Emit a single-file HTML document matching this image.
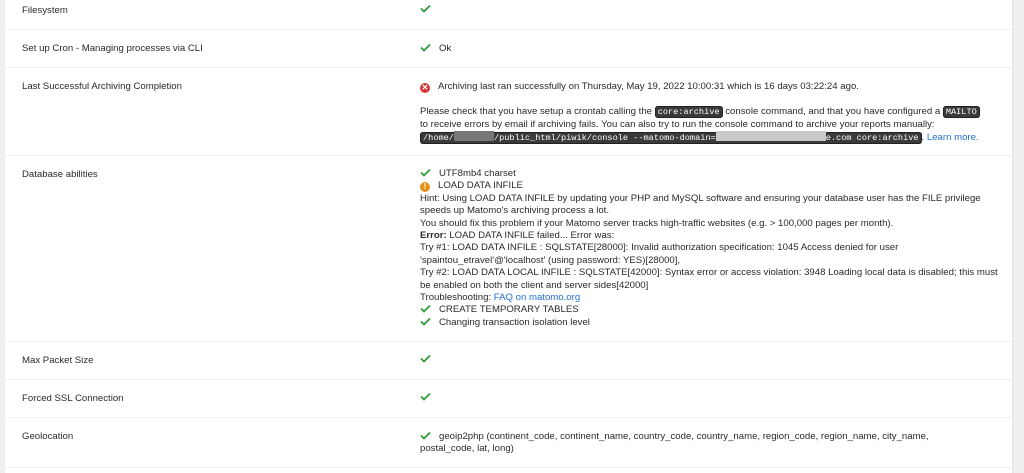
<!DOCTYPE html>
<html><head><meta charset="utf-8"><style>
*{margin:0;padding:0;box-sizing:border-box}
body{width:1024px;height:473px;overflow:hidden;background:#fff;font-family:"Liberation Sans",sans-serif;font-size:9.6px;color:#2a2a2a;position:relative}
.lstrip{position:absolute;left:0;top:0;width:5px;height:473px;background:#eeeff1}
.rstrip{position:absolute;left:1012px;top:0;width:12px;height:473px;background:#eeeff1;border-left:1px solid #e2e3e6}
.hr{position:absolute;left:5px;width:1007px;height:1px;background:#eef0f2}
.t{position:absolute;white-space:nowrap;line-height:12.4px}
.lab{left:22px}
.v{left:420px}
.ck{display:inline-block;width:11px;height:9px;vertical-align:-1px}
code{font-family:"Liberation Mono",monospace;font-size:8.6px;background:#3a3a3a;color:#fff;border-radius:3px;padding:0 2px;border:1px solid #222}
a{color:#1e6fd0;text-decoration:none}
.ic{display:inline-block;width:10px;height:10px;border-radius:50%;color:#fff;font-size:8px;font-weight:bold;text-align:center;line-height:10px;vertical-align:-1px}
.blur{display:inline-block;background:#c9c9c9;height:10px;vertical-align:-1px}
</style></head><body>
<svg width="0" height="0" style="position:absolute"><symbol id="c" viewBox="0 0 11 9"><path d="M1 4.5 L4 7.5 L10 1.5" fill="none" stroke="#2e9a3a" stroke-width="1.8"/></symbol></svg>
<div class="lstrip"></div><div class="rstrip"></div>
<div class="hr" style="top:29px"></div>
<div class="hr" style="top:67px"></div>
<div class="hr" style="top:155px"></div>
<div class="hr" style="top:341px"></div>
<div class="hr" style="top:379px"></div>
<div class="hr" style="top:417px"></div>
<div class="hr" style="top:467px"></div>

<div class="t lab" style="top:5px">Filesystem</div>
<div class="t v" style="top:4px"><svg class="ck"><use href="#c"/></svg></div>

<div class="t lab" style="top:43px">Set up Cron - Managing processes via CLI</div>
<div class="t v" style="top:43px"><svg class="ck"><use href="#c"/></svg>&nbsp;&nbsp;&nbsp;Ok</div>

<div class="t lab" style="top:81px">Last Successful Archiving Completion</div>
<div class="t v" style="top:81px"><span class="ic" style="background:#d4373a">✕</span>&nbsp;&nbsp;&nbsp;Archiving last ran successfully on Thursday, May 19, 2022 10:00:31 which is 16 days 03:22:24 ago.</div>
<div class="t v" style="top:106px;line-height:12.5px">Please check that you have setup a crontab calling the <code>core:archive</code> console command, and that you have configured a <code>MAILTO</code><br>to receive errors by email if archiving fails. You can also try to run the console command to archive your reports manually:<br><code>/home/<span class="blur" style="width:40px;background:#777"></span>/public_html/piwik/console --matomo-domain=<span class="blur" style="width:110px"></span>e.com core:archive</code>. <a>Learn more.</a></div>

<div class="t lab" style="top:169px">Database abilities</div>
<div class="t v" style="top:168px;line-height:12.4px"><svg class="ck"><use href="#c"/></svg>&nbsp;&nbsp;&nbsp;UTF8mb4 charset<br><span class="ic" style="background:#e8901a">!</span>&nbsp;&nbsp;&nbsp;LOAD DATA INFILE<br>Hint: Using LOAD DATA INFILE by updating your PHP and MySQL software and ensuring your database user has the FILE privilege<br>speeds up Matomo's archiving process a lot.<br>You should fix this problem if your Matomo server tracks high-traffic websites (e.g. &gt; 100,000 pages per month).<br><b>Error:</b> LOAD DATA INFILE failed... Error was:<br>Try #1: LOAD DATA INFILE : SQLSTATE[28000]: Invalid authorization specification: 1045 Access denied for user<br>'spaintou_etravel'@'localhost' (using password: YES)[28000],<br>Try #2: LOAD DATA LOCAL INFILE : SQLSTATE[42000]: Syntax error or access violation: 3948 Loading local data is disabled; this must<br>be enabled on both the client and server sides[42000]<br>Troubleshooting: <a>FAQ on matomo.org</a><br><svg class="ck"><use href="#c"/></svg>&nbsp;&nbsp;&nbsp;CREATE TEMPORARY TABLES<br><svg class="ck"><use href="#c"/></svg>&nbsp;&nbsp;&nbsp;Changing transaction isolation level</div>

<div class="t lab" style="top:355px">Max Packet Size</div>
<div class="t v" style="top:354px"><svg class="ck"><use href="#c"/></svg></div>

<div class="t lab" style="top:393px">Forced SSL Connection</div>
<div class="t v" style="top:392px"><svg class="ck"><use href="#c"/></svg></div>

<div class="t lab" style="top:431px">Geolocation</div>
<div class="t v" style="top:431px"><svg class="ck"><use href="#c"/></svg>&nbsp;&nbsp;&nbsp;geoip2php (continent_code, continent_name, country_code, country_name, region_code, region_name, city_name,<br>postal_code, lat, long)</div>
</body></html>
